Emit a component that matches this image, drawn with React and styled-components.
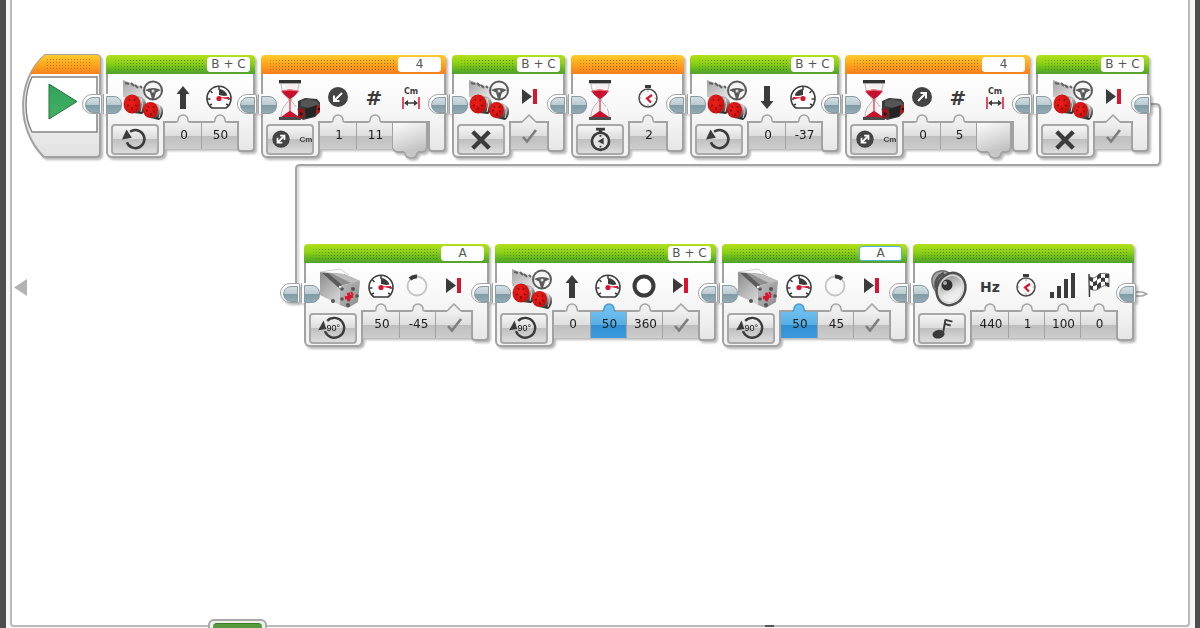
import React from 'react';
import styled, { createGlobalStyle, css } from 'styled-components';

const GlobalStyle = createGlobalStyle`
  * { box-sizing: border-box; }
  body { margin: 0; background: #f6f6f6; font-family: "DejaVu Sans", Verdana, sans-serif; color: #333; }
  button, input { font: inherit; color: inherit; margin: 0; padding: 0; }
  svg { display: block; overflow: visible; }
`;

const INK = '#3b3b3b';
const LINE = '#a2a2a2';
const RED = '#d8142e';

/* ---------- page ---------- */

const Editor = styled.main`
  display: flex;
  flex-direction: column;
  height: 100vh;
  overflow: hidden;
  border: solid #4d4d4d;
  border-width: 0 5px 0 6px;
  padding: 0 5px 1px 4px;
`;

const Canvas = styled.section`
  position: relative;
  flex: 1;
  padding-top: 55px;
  background: #fff;
  border: solid #bababa;
  border-width: 0 2px 2px;
  border-radius: 0 0 4px 4px;
`;

const Sequence = styled.div`
  display: flex;
  align-items: flex-start;
  gap: 6px;
  height: 103px;
  padding-left: ${(p) => p.$indent}px;
  margin-bottom: 86px;
`;

const Wire = styled.svg`
  position: absolute;
  left: 0;
  top: 0;
  pointer-events: none;
`;

const ScrollLeft = styled.button`
  position: absolute;
  left: 2px;
  top: 279px;
  border: 0;
  background: none;
`;

const PaletteTab = styled.button`
  position: absolute;
  left: 196px;
  bottom: -17px;
  width: 59px;
  height: 23px;
  padding: 2px 3px;
  border: 2px solid #a8a8a8;
  border-radius: 6px;
  background: #eef1ec;
`;

const PaletteColour = styled.span`
  display: block;
  height: 100%;
  border-top: 1px solid #3d7a2c;
  border-radius: 4px 4px 0 0;
  background: #569a3c;
`;

const PaletteHandle = styled.span`
  position: absolute;
  left: 753px;
  bottom: -2px;
  width: 9px;
  height: 2px;
  background: #555;
`;

/* ---------- blocks ---------- */

const StartButton = styled.button`
  width: 78px;
  height: 103px;
  border: 0;
  background: none;
  filter: drop-shadow(2px 2px 1px rgba(0, 0, 0, 0.28));
`;

const BlockBox = styled.article`
  position: relative;
  flex: none;
  filter: drop-shadow(2px 2px 1px rgba(0, 0, 0, 0.28));
`;

const tones = {
  green: 'linear-gradient(#b4e01a, #8bd014 45%, #62b51e 75%, #54a032)',
  orange: 'linear-gradient(#ffcb2e, #ffa81c 45%, #fb8c1e 80%, #f2801f)',
};

const Header = styled.header`
  display: flex;
  align-items: center;
  gap: 4px;
  height: 19px;
  padding: 0 5px 0 8px;
  border-radius: 4px 4px 0 0;
  background: ${(p) => tones[p.$tone]};
`;

const Grip = styled.span`
  flex: 1;
  height: 12px;
  background: radial-gradient(circle, rgba(60, 70, 0, 0.6) 0 1px, transparent 1px) 0 0 / 3px 3px;
  mask-image: linear-gradient(90deg, rgba(0, 0, 0, 0.4), #000 20px);
`;

const Port = styled.button`
  width: 43px;
  height: 15px;
  border: 1px solid ${(p) => (p.$selected ? '#4fb4d8' : '#fff')};
  border-radius: 3px;
  background: #fff;
  font-size: 12px;
  line-height: 13px;
  color: #555;
  white-space: nowrap;
`;

const Columns = styled.div`
  display: flex;
  align-items: flex-start;
`;

const Face = styled.div`
  display: flex;
  align-items: center;
  justify-content: center;
  height: 47px;
  background: linear-gradient(#fff, #f4f4f4);
`;

const ModeColumn = styled.div`
  width: 59px;
`;

const ModeFace = styled(Face)`
  justify-content: flex-start;
  padding: 4px 0 0 15px;
  border-left: 2px solid ${LINE};
`;

const ModePanel = styled.div`
  height: 37px;
  padding: 3px 4px 4px 3px;
  border: solid ${LINE};
  border-width: 0 2px 2px;
  border-radius: 0 0 6px 6px;
  background: #f2f2f2;
`;

const ModeButton = styled.button`
  display: flex;
  align-items: center;
  justify-content: center;
  gap: 6px;
  width: 100%;
  height: 31px;
  border: 2px solid #a8a8a8;
  border-radius: 4px;
  background: linear-gradient(#f6f6f6, #dcdcdc 48%, #bfbfbf 50%, #dcdcdc);
`;

const UnitText = styled.span`
  font-family: ${(p) => (p.$narrow ? '"Liberation Sans", Arial, sans-serif' : 'inherit')};
  font-size: 8px;
  line-height: 9px;
  font-weight: bold;
  color: ${INK};
`;

const SymbolText = styled.span`
  font-size: ${(p) => (p.$large ? 20 : 14)}px;
  line-height: 20px;
  font-weight: bold;
  color: ${INK};
`;

const Distance = styled.span`
  display: flex;
  flex-direction: column;
  align-items: center;
  gap: 1px;
  padding-left: 2px;
`;

const ParamColumn = styled.div`
  width: 36px;
`;

const cellFill = {
  plain: 'linear-gradient(#efefef, #dedede 48%, #bebebe 50%, #cdcdcd)',
  active: 'linear-gradient(#6cbeee, #55aee4 48%, #2f8fd2 50%, #3b9bdc)',
  output: 'linear-gradient(160deg, #fcfcfc, #dadada 55%, #bdbdbd)',
};

const Cell = styled.div`
  position: relative;
  display: flex;
  height: 28px;
  border-top: 2px solid ${LINE};
  background: ${(p) => cellFill[p.$fill]};
  ${ParamColumn} + ${ParamColumn} > & {
    border-left: 1px solid ${LINE};
  }
  ${(p) =>
    p.$fill === 'output' &&
    css`
      height: 32px;
      border: 2px solid ${LINE};
      border-radius: 0 0 6px 6px;
    `}
`;

const Bump = styled.svg`
  position: absolute;
  left: calc(50% - 8px);
  top: -9px;
`;

const OutputBump = styled.svg`
  position: absolute;
  left: calc(50% - 8px);
  bottom: -8px;
`;

const Value = styled.input`
  width: 100%;
  height: 24px;
  padding-left: 2px;
  border: 0;
  background: none;
  font-size: 12px;
  text-align: center;
  color: #1c1c1c;
`;

const CheckButton = styled.button`
  display: flex;
  align-items: center;
  justify-content: center;
  width: 100%;
  border: 0;
  background: none;
`;

const EndColumn = styled.div`
  width: 18px;
`;

const EndFace = styled(Face)`
  border-right: 2px solid ${LINE};
`;

const EndLeg = styled.div`
  height: 31px;
  border: solid ${LINE};
  border-width: 0 2px 2px;
  border-radius: 0 0 4px 4px;
  background: linear-gradient(#f4f4f4, #e6e6e6);
`;

const plugFill = 'linear-gradient(#d3dee2, #bccbd1 48%, #7f9ba6 52%, #93abb4)';

const PlugIn = styled.span`
  position: absolute;
  left: -3px;
  top: 39px;
  width: 19px;
  height: 20px;
  padding: 2px 0 2px 2px;
  border-left: 1px solid ${LINE};
  background: linear-gradient(#fff, #fff) 0 0 / 5px 100% no-repeat;
  &::after {
    content: '';
    display: block;
    height: 100%;
    border: 1px solid #869ba4;
    border-radius: 0 8px 8px 0;
    background: ${plugFill};
  }
`;

const PlugOut = styled.span`
  position: absolute;
  ${(p) => (p.$lead ? 'left: -24px;' : 'right: -2px;')}
  top: 39px;
  width: 20px;
  height: 20px;
  padding: 2px 1px 2px 2px;
  border: 1px solid ${LINE};
  border-radius: 10px 2px 2px 10px;
  background: #fff;
  &::after {
    content: '';
    display: block;
    height: 100%;
    border: 1px solid #869ba4;
    border-radius: 8px 0 0 8px;
    background: ${plugFill};
  }
`;

/* ---------- block pictures ---------- */

const SteeringArt = () => (
  <svg width="42" height="40" viewBox="0 0 42 40" aria-hidden="true">
    <defs>
      <linearGradient id="fade" x1="0" y1="0" x2="1" y2="1">
        <stop offset="0" stopColor="#a2a2a2" />
        <stop offset="1" stopColor="#f0f0f0" />
      </linearGradient>
      <linearGradient id="tyre" x1="0" y1="0" x2=".3" y2="1">
        <stop offset="0" stopColor="#9a9a9a" />
        <stop offset=".4" stopColor="#b9b9b9" />
        <stop offset=".75" stopColor="#6b6b6b" />
        <stop offset="1" stopColor="#2e2e2e" />
      </linearGradient>
      <radialGradient id="hub" cx=".4" cy=".4" r=".7">
        <stop offset="0" stopColor="#f0201a" />
        <stop offset="1" stopColor="#c20d0d" />
      </radialGradient>
    </defs>
    <path d="M0 0 L19 7 L24 20 L0 17Z" fill="url(#fade)" />
    <path d="M2 3 l4 1 M8 3 l3 3 M12 5 l3 3 M17 6 l2 2" stroke="#636363" strokeWidth="2" />
    <path d="M26 22 L35 24 Q41 27 40 33 Q39 38 36 40 L27 38Z" fill="url(#tyre)" />
    <path d="M10 15 L19 17 Q24 20 23 27 Q22 32 19 34 L10 33Z" fill="url(#tyre)" />
    <path d="M35 24 Q39 30 36 38" fill="none" stroke="#ddd" strokeWidth="1" />
    <path d="M18 18 Q21 24 18 32" fill="none" stroke="#ddd" strokeWidth="1" />
    <ellipse cx="27.500" cy="30" rx="7.500" ry="8" fill="url(#hub)" />
    <ellipse cx="9" cy="24" rx="8.500" ry="9.500" fill="url(#hub)" />
    <path d="M6 19l1 2M12 19l-1 2M9 27v3M4 26l2-1M12 25l2 1" stroke="#8e0a0a" strokeWidth="1.500" />
    <path d="M25 26l1 2M31 26l-1 2M28 33v3M23 31l2-1M30 31l2 1" stroke="#8e0a0a" strokeWidth="1.500" />
    <circle cx="30" cy="10.500" r="9" fill="#f5f5f5" stroke="#5b5b5b" strokeWidth="2" />
    <path d="M22 10 Q30 6 38 10 L33 12.500 L31 19 H29 L27 12.500Z" fill="#5b5b5b" />
    <circle cx="30" cy="11" r="1.500" fill="#ddd" />
  </svg>
);

const MotorArt = () => (
  <svg width="42" height="40" viewBox="1 1 42 40" aria-hidden="true">
    <defs>
      <linearGradient id="side" x1="0" y1="0" x2=".6" y2="1">
        <stop offset="0" stopColor="#8a8a8a" />
        <stop offset="1" stopColor="#d2d2d2" />
      </linearGradient>
      <linearGradient id="front" x1="0" y1="0" x2="1" y2="1">
        <stop offset="0" stopColor="#bdbdbd" />
        <stop offset="1" stopColor="#8b8b8b" />
      </linearGradient>
    </defs>
    <path d="M0 4 L20 1 L29 7" fill="none" stroke="#d2d2d2" />
    <path d="M0 4 L24 6 L40 13 L20 18Z" fill="#8f8f8f" />
    <path d="M11 5 L24 6 L40 13 L31 15Z" fill="#bdbdbd" />
    <path d="M0 4 L20 18 V37 L0 27Z" fill="url(#side)" />
    <path d="M2 5 L8 5 L22 17 L20 21Z" fill="#5c5c5c" />
    <path d="M20 18 L40 13 L38 34 L28 40 L20 37Z" fill="url(#front)" />
    <path d="M28 25 L30 29 L28 33 M25 30 L33 28" stroke={RED} strokeWidth="3" fill="none" />
    <path d="M31 24 L33 27" stroke={RED} strokeWidth="2" />
    <g fill="#555">
      <circle cx="22" cy="21" r="1.800" />
      <circle cx="33" cy="21" r="2" />
      <circle cx="37" cy="28" r="1.800" />
      <circle cx="28" cy="37" r="2" />
      <circle cx="22" cy="31" r="1.800" />
      <circle cx="13" cy="33" r="2" />
    </g>
    <circle cx="20" cy="19" r="1.200" fill="#f2f2f2" />
  </svg>
);

const HourglassArt = ({ sensor }) => (
  <svg width="42" height="40" viewBox="-1 0 42 40" aria-hidden="true">
    <path d="M2 3 C2 13 8 16 10 20 C8 24 2 27 2 37 H20 C20 27 14 24 12 20 C14 16 20 13 20 3Z" fill="#f6f0f1" stroke="#bdb5b6" />
    <path d="M2 11 Q10 8 20 11 Q17 15 11.500 19 V31 L20 37 H2 L10.500 31 V19 Q5 15 2 11Z" fill="#c8102e" />
    <path d="M3 11 Q11 9 19 11" fill="none" stroke="#f07a88" />
    <path d="M5 5v3M17 27v5" stroke="#fff" strokeWidth="2" />
    <rect width="22" height="3" fill="#333" />
    <rect y="37" width="22" height="3" fill="#4a4a4a" />
    <path d="M0 3.500H22" stroke="#aaa" />
    {sensor && (
      <g>
        <path d="M19 21 L26 18 L38 19 L43 25 L42 31 L36 37 L24 40 L19 36Z" fill="#3a3a3a" />
        <path d="M22 21 L29 19 L37 21 L41 25 L30 28 L22 26Z" fill="#555" />
        <path d="M26 29 L38 25 L36 36 L27 38Z" fill="#242424" />
        <path d="M19 30 L24 28 L26 34 L22 39 L19 37Z" fill="#a40f17" />
        <path d="M38 26 L43 24 L42 31 L37 35Z" fill="#b8151d" />
        <circle cx="22" cy="34" r="1.800" fill="#222" />
        <circle cx="40" cy="29" r="1.300" fill="#3a0a0a" />
      </g>
    )}
  </svg>
);

const SpeakerArt = () => (
  <svg width="42" height="40" viewBox="0 0 42 40" aria-hidden="true">
    <defs>
      <linearGradient id="cone" x1="0" y1="0" x2="1" y2="1">
        <stop offset="0" stopColor="#6c6c6c" />
        <stop offset=".6" stopColor="#e9e9e9" />
        <stop offset="1" stopColor="#fff" />
      </linearGradient>
    </defs>
    <path d="M2 13 Q1 4 10 2 Q16 1 20 5 L14 28 Q3 24 2 13Z" fill="#a5a5a5" stroke="#6e6e6e" strokeWidth="1.500" />
    <path d="M6 19 Q4 9 14 4" stroke="#555" strokeWidth="3" fill="none" />
    <ellipse cx="21" cy="20" rx="14" ry="16.500" transform="rotate(24 21 20)" fill="url(#cone)" stroke="#505050" strokeWidth="2.500" />
    <ellipse cx="21" cy="20" rx="11.500" ry="14" transform="rotate(24 21 20)" fill="none" stroke="#d8d8d8" strokeWidth="1.500" />
    <circle cx="17" cy="16" r="5.500" fill="#333" />
    <circle cx="15" cy="14" r="2" fill="#aaa" />
  </svg>
);

const art = {
  steering: <SteeringArt />,
  motor: <MotorArt />,
  wait: <HourglassArt />,
  sensor: <HourglassArt sensor />,
  sound: <SpeakerArt />,
};

/* ---------- small icons, on a 30 x 30 grid ---------- */

const Glyph = ({ children, size = 30 }) => (
  <svg width={size} height={size} viewBox="0 0 30 30" aria-hidden="true">
    {children}
  </svg>
);

const Straight = ({ down }) => (
  <Glyph>
    <path d="M15 3 L21.500 11 H18 V26 H12 V11 H8.500Z" fill={INK} transform={down ? 'rotate(180 15 14.5)' : undefined} />
  </Glyph>
);

const Gauge = ({ reverse }) => (
  <Glyph>
    <g transform={reverse ? 'matrix(-1 0 0 1 30 0)' : undefined}>
      <path d="M8 25 A12 12 0 1 1 22 25 Z" fill="#fff" stroke={INK} strokeWidth="1.600" strokeLinejoin="round" />
      <path d="M15 4v3M6.500 8l2 2M3.500 16h3M6 22l2-1M24 22l-2-1M26 16h-2" stroke={INK} strokeWidth="1.500" />
      <path d="M15 12 V6 A10 10 0 0 1 23.500 12.500 L20 13Z" fill={INK} />
      <path d="M15 14.500 L25 14 L25 16.500 Z" fill={RED} />
      <circle cx="15" cy="15.500" r="2.600" fill={RED} />
    </g>
  </Glyph>
);

const Compare = ({ both, up }) => (
  <Glyph size={both ? 26 : 30}>
    <circle cx="15" cy="14" r="10" fill="#444" />
    <g stroke="#fff" strokeWidth="2" fill="none" transform={up ? 'rotate(180 15 14)' : undefined}>
      <path d="M19 10 L11 18" />
      <path d="M11 12.500 V18 H16.500" />
      {both && <path d="M14 10 H19 V15" />}
    </g>
  </Glyph>
);

const DistanceIcon = () => (
  <Distance>
    <UnitText>Cm</UnitText>
    <svg width="18" height="12" viewBox="0 0 18 12" aria-hidden="true">
      <path d="M1 0V12M17 0V12" stroke={RED} strokeWidth="1.500" />
      <path d="M3 6H15" stroke={INK} strokeWidth="1.500" />
      <path d="M2 6l4-3v6ZM16 6l-4-3v6Z" fill={INK} />
    </svg>
  </Distance>
);

const Brake = () => (
  <Glyph>
    <path d="M8 6 L18 13.500 L8 21Z" fill={INK} />
    <rect x="19" y="6" width="4" height="15" fill={RED} />
  </Glyph>
);

const Stopwatch = () => (
  <Glyph>
    <circle cx="15" cy="15" r="9" fill="#fff" stroke="#4a4a4a" strokeWidth="1.500" />
    <path d="M12 3.500h6" stroke={INK} strokeWidth="3" />
    <path d="M19 12 L14 15.500 L18 19.500" fill="none" stroke={RED} strokeWidth="2.200" />
    <path d="M15 7v2M15 21v2M7 15h1.500M21.500 15h1.500" stroke="#999" />
  </Glyph>
);

const Degrees = ({ left }) => (
  <Glyph>
    <g transform={left ? 'matrix(-1 0 0 1 30 0)' : undefined}>
      <circle cx="15" cy="14" r="9.500" fill="none" stroke="#c4c4c4" strokeWidth="1.800" />
      <path d="M15 4.500 A9.500 9.500 0 0 1 22 7" fill="none" stroke={INK} strokeWidth="4" />
    </g>
  </Glyph>
);

const Rotations = () => (
  <Glyph>
    <circle cx="15" cy="14" r="9.500" fill="#fff" stroke={INK} strokeWidth="4" />
  </Glyph>
);

const Volume = () => (
  <Glyph>
    <path d="M3 20h4v6h-4zM10 14h4v12h-4zM17 7h4v19h-4zM24 1h4v25h-4z" fill={INK} />
  </Glyph>
);

const Flag = () => (
  <Glyph>
    <path d="M6 2 L6.500 25" stroke={INK} strokeWidth="1.500" />
    <path d="M6 4 Q10 8 14 4 T26 2 V15 Q21 12 17 16 T7 17Z" fill="#fff" stroke="#777" />
    <path d="M6 4 Q8 6 10 6V10Q8 10 6 8ZM14 4Q16 1 18 1V6Q16 6 14 8ZM10 10Q12 10 14 8V13Q12 14 10 14ZM18 6Q20 5 22 6V10Q20 9 18 10ZM6 13Q8 14 10 14V18Q8 18 7 17ZM14 13Q16 10 18 10V15Q16 16 14 18ZM22 2L26 2V6L22 6ZM22 10L26 11V15L22 13Z" fill={INK} />
  </Glyph>
);

const Check = () => (
  <svg width="18" height="16" viewBox="0 0 18 16" aria-hidden="true">
    <path d="M3 9 L7 13.500 L16 2" fill="none" stroke="#7d7d7d" strokeWidth="2.600" />
  </svg>
);

const Spin = ({ thin }) => (
  <Glyph size={27}>
    {thin ? (
      <>
        <path d="M5.500 18 A11 11 0 1 0 8 6.500" fill="none" stroke={INK} strokeWidth="2.600" />
        <path d="M-2 17 L4 6 L7 15.500Z" fill={INK} />
      </>
    ) : (
      <>
        <path d="M5.500 18 A10 10 0 1 0 9 6.500" fill="none" stroke={INK} strokeWidth="2.800" />
        <path d="M0 15 L5 4 L11 13Z" fill={INK} />
      </>
    )}
  </Glyph>
);

const SpinBox = styled.span`
  position: relative;
  display: flex;
`;

const SpinText = styled.span`
  position: absolute;
  left: 7px;
  top: 7px;
  font-family: "Liberation Sans", Arial, sans-serif;
  font-size: 9px;
  line-height: 12px;
  color: #111;
`;

const modeArt = {
  on: <Spin />,
  degrees: (
    <SpinBox>
      <Spin thin />
      <SpinText>90°</SpinText>
    </SpinBox>
  ),
  off: (
    <Glyph size={26}>
      <path d="M5.500 5.500 L24.500 24.500 M24.500 5.500 L5.500 24.500" stroke={INK} strokeWidth="5" />
    </Glyph>
  ),
  time: (
    <Glyph size={27}>
      <circle cx="15" cy="17" r="9.500" fill="#e4e4e4" stroke={INK} strokeWidth="3" />
      <path d="M10 3.500h10" stroke={INK} strokeWidth="3" />
      <path d="M15 4v4" stroke={INK} strokeWidth="4" />
      <path d="M18.500 13 L12 17 L18.500 20.500Z" fill={INK} />
      <path d="M15 10v2M15 22v2" stroke={INK} strokeWidth="2" />
    </Glyph>
  ),
  compare: (
    <>
      <Compare both />
      <UnitText $narrow>Cm</UnitText>
    </>
  ),
  tone: (
    <Glyph size={26}>
      <ellipse cx="11" cy="21" rx="7" ry="5" fill={INK} transform="rotate(-10 11 21)" />
      <path d="M16 21 L19 4 M19 4.500 L27 6.500 M18 9 L25 11" stroke={INK} strokeWidth="2.200" fill="none" />
    </Glyph>
  ),
};

const paramArt = {
  forward: <Straight />,
  backward: <Straight down />,
  power: <Gauge />,
  reverse: <Gauge reverse />,
  less: <Compare />,
  greater: <Compare up />,
  count: <SymbolText $large>#</SymbolText>,
  distance: <DistanceIcon />,
  brake: <Brake />,
  time: <Stopwatch />,
  degreesLeft: <Degrees left />,
  degrees: <Degrees />,
  rotations: <Rotations />,
  hertz: <SymbolText>Hz</SymbolText>,
  volume: <Volume />,
  flag: <Flag />,
};

function Param({ icon, value, active }) {
  const isOutput = icon === 'distance';
  const isCheck = icon === 'brake';
  const fill = isOutput ? 'output' : active ? 'active' : 'plain';
  return (
    <ParamColumn>
      <Face>{paramArt[icon]}</Face>
      <Cell $fill={fill}>
        {!isOutput && (
          <Bump width="16" height="10" viewBox="0 0 16 10" aria-hidden="true">
            <path
              d={isCheck ? 'M1 8 L8 1 L15 8 V10 H1Z' : 'M1 8 H2 Q3 8 3 6 A5 5 0 0 1 13 6 Q13 8 14 8 H15 V10 H1Z'}
              fill={active ? '#6cbeee' : '#efefef'}
            />
            <path
              d={isCheck ? 'M1 8 L8 1 L15 8' : 'M1 8 H2 Q3 8 3 6 A5 5 0 0 1 13 6 Q13 8 14 8 H15'}
              fill="none"
              stroke={active ? '#4b9ccc' : LINE}
              strokeWidth="1.500"
            />
          </Bump>
        )}
        {isCheck && (
          <CheckButton type="button" aria-label={`${icon} at end`}>
            <Check />
          </CheckButton>
        )}
        {isOutput && (
          <OutputBump width="16" height="8" viewBox="0 0 16 8" aria-hidden="true">
            <path d="M1 0 Q3 1 3 3 Q4 7 9 7 Q14 7 15 3 Q15 1 17 0Z" fill="#c8c8c8" />
            <path d="M1 1 Q3 1 3 3 Q4 7 9 7 Q14 7 15 3 Q15 1 17 1" fill="none" stroke={LINE} strokeWidth="1.500" />
          </OutputBump>
        )}
        {!isCheck && !isOutput && <Value type="text" aria-label={icon} defaultValue={value} />}
      </Cell>
    </ParamColumn>
  );
}

function Block({ tone = 'green', port, portSelected, picture, mode, params, lead }) {
  return (
    <BlockBox>
      <Header $tone={tone}>
        <Grip />
        {port && (
          <Port type="button" $selected={portSelected}>
            {port}
          </Port>
        )}
      </Header>
      <Columns>
        <ModeColumn>
          <ModeFace>{art[picture]}</ModeFace>
          <ModePanel>
            <ModeButton type="button" aria-label={`Mode: ${mode}`}>
              {modeArt[mode]}
            </ModeButton>
          </ModePanel>
        </ModeColumn>
        {params.map(([icon, value, active]) => (
          <Param key={icon} icon={icon} value={value} active={active} />
        ))}
        <EndColumn>
          <EndFace />
          <EndLeg />
        </EndColumn>
      </Columns>
      {lead && <PlugOut $lead />}
      <PlugIn />
      <PlugOut />
    </BlockBox>
  );
}

const StartSlot = styled.div`
  position: relative;
  flex: none;
`;

function StartBlock() {
  const shape = 'M23 3 H74 Q78 3 78 7 V101 Q78 105 74 105 H22 C-6 78 -6 28 23 3Z';
  return (
    <StartSlot>
      <StartButton type="button" aria-label="Start program">
        <svg width="78" height="103" viewBox="0 3 78 103" aria-hidden="true">
          <defs>
            <linearGradient id="startBody" x1="0" y1="0" x2="0" y2="1">
              <stop offset="0" stopColor="#fff" />
              <stop offset="1" stopColor="#e2e2e2" />
            </linearGradient>
            <linearGradient id="startHead" x1="0" y1="0" x2="0" y2="1">
              <stop offset="0" stopColor="#ffd22e" />
              <stop offset=".5" stopColor="#ffa81c" />
              <stop offset="1" stopColor="#f5821f" />
            </linearGradient>
            <linearGradient id="play" x1="0" y1="0" x2="0" y2="1">
              <stop offset="0" stopColor="#2fa35a" />
              <stop offset="1" stopColor="#45b064" />
            </linearGradient>
            <pattern id="dots" width="3" height="3" patternUnits="userSpaceOnUse">
              <rect x="1" y="1" width="1" height="1" fill="#b87400" />
            </pattern>
            <clipPath id="startClip">
              <path d={shape} />
            </clipPath>
          </defs>
          <path d={shape} fill="url(#startBody)" stroke={LINE} strokeWidth="2" />
          <g clipPath="url(#startClip)">
            <rect y="2" width="79" height="20" fill="url(#startHead)" />
            <rect x="24" y="6" width="44" height="12" fill="url(#dots)" />
          </g>
          <path d="M10 25 H75 V80 H10 C2 65 2 41 10 25Z" fill="#fff" stroke="#858585" strokeWidth="1.500" />
          <path d="M27 32 L55 49.500 L27 67Z" fill="url(#play)" stroke="#23713f" />
        </svg>
      </StartButton>
      <PlugOut />
    </StartSlot>
  );
}

const firstRow = [
  { port: 'B + C', picture: 'steering', mode: 'on', params: [['forward', '0'], ['power', '50']] },
  { tone: 'orange', port: '4', picture: 'sensor', mode: 'compare', params: [['less', '1'], ['count', '11'], ['distance']] },
  { port: 'B + C', picture: 'steering', mode: 'off', params: [['brake']] },
  { tone: 'orange', picture: 'wait', mode: 'time', params: [['time', '2']] },
  { port: 'B + C', picture: 'steering', mode: 'on', params: [['backward', '0'], ['reverse', '-37']] },
  { tone: 'orange', port: '4', picture: 'sensor', mode: 'compare', params: [['greater', '0'], ['count', '5'], ['distance']] },
  { port: 'B + C', picture: 'steering', mode: 'off', params: [['brake']] },
];

const secondRow = [
  { lead: true, port: 'A', picture: 'motor', mode: 'degrees', params: [['power', '50'], ['degreesLeft', '-45'], ['brake']] },
  { port: 'B + C', picture: 'steering', mode: 'degrees', params: [['forward', '0'], ['power', '50', true], ['rotations', '360'], ['brake']] },
  { port: 'A', portSelected: true, picture: 'motor', mode: 'degrees', params: [['power', '50', true], ['degrees', '45'], ['brake']] },
  { picture: 'sound', mode: 'tone', params: [['hertz', '440'], ['time', '1'], ['volume', '100'], ['flag', '0']] },
];

export default function App() {
  return (
    <>
      <GlobalStyle />
      <Editor>
        <Canvas>
          <Wire width="1160" height="320" viewBox="12 0 1160 320" aria-hidden="true">
            <g fill="none" strokeLinejoin="round">
              <path d="M1148 106 H1156 Q1161 106 1161 111 V161 Q1161 166 1156 166 H301 Q298 166 298 169 V286" stroke="#dedede" strokeWidth="3" />
              <path d="M1148 104 H1156 Q1160 104 1160 109 V160 Q1160 165 1156 165 H300 Q296 165 296 169 V286" stroke="#a4a4a4" strokeWidth="2" />
              <path d="M1134 292 H1142 L1147 294 L1142 296 H1134" fill="#fff" stroke="#a4a4a4" strokeWidth="1.500" />
            </g>
          </Wire>
          <Sequence $indent={10}>
            <StartBlock />
            {firstRow.map((block, i) => (
              <Block key={i} {...block} />
            ))}
          </Sequence>
          <Sequence $indent={292}>
            {secondRow.map((block, i) => (
              <Block key={i} {...block} />
            ))}
          </Sequence>
          <ScrollLeft type="button" aria-label="Scroll left">
            <svg width="13" height="17" viewBox="0 0 13 17" aria-hidden="true">
              <path d="M0 8.500 L13 0 V17Z" fill="#b3b3b3" />
            </svg>
          </ScrollLeft>
          <PaletteTab type="button" aria-label="Action blocks">
            <PaletteColour />
          </PaletteTab>
          <PaletteHandle />
        </Canvas>
      </Editor>
    </>
  );
}
